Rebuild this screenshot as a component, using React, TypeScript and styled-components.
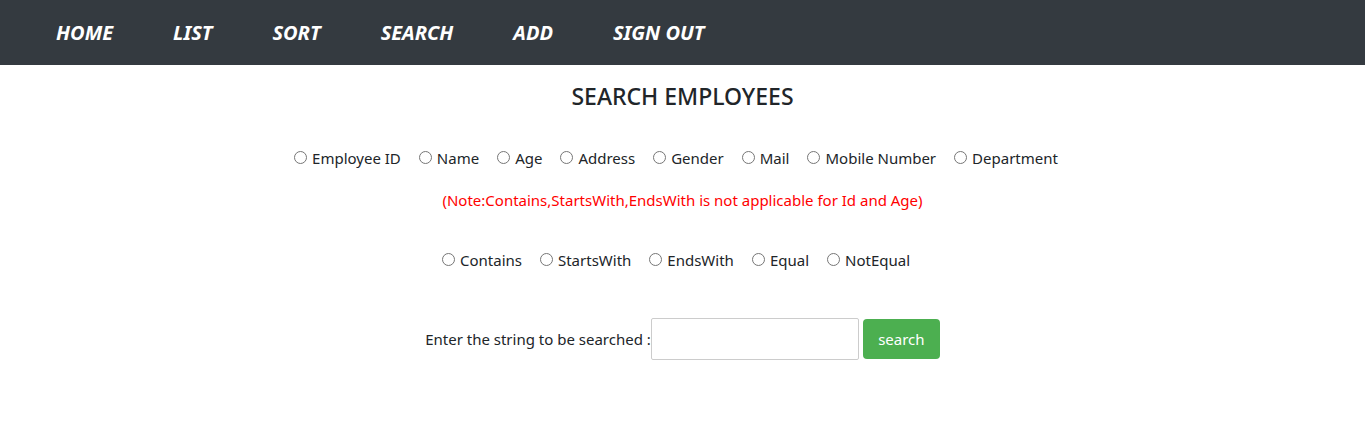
import { createGlobalStyle, styled } from 'styled-components';

const NAV_ITEMS = ['HOME', 'LIST', 'SORT', 'SEARCH', 'ADD', 'SIGN OUT'];
const FIELDS = ['Employee ID', 'Name', 'Age', 'Address', 'Gender', 'Mail', 'Mobile Number', 'Department'];
const MODES = ['Contains', 'StartsWith', 'EndsWith', 'Equal', 'NotEqual'];

export default function App() {
  return (
    <>
      <GlobalStyle />
      <NavBar>
        {NAV_ITEMS.map((item) => (
          <NavLink key={item} href="#">
            {item}
          </NavLink>
        ))}
      </NavBar>
      <Main>
        <Title>SEARCH EMPLOYEES</Title>
        <RadioRow $top={36}>
          {FIELDS.map((field) => (
            <RadioLabel key={field}>
              <Radio type="radio" name="field" />
              {field}
            </RadioLabel>
          ))}
        </RadioRow>
        <Note>(Note:Contains,StartsWith,EndsWith is not applicable for Id and Age)</Note>
        <RadioRow $top={38}>
          {MODES.map((mode) => (
            <RadioLabel key={mode}>
              <Radio type="radio" name="mode" />
              {mode}
            </RadioLabel>
          ))}
        </RadioRow>
        <SearchRow>
          <SearchLabel>Enter the string to be searched :</SearchLabel>
          <SearchInput type="text" />
          <SearchButton>search</SearchButton>
        </SearchRow>
      </Main>
    </>
  );
}

const GlobalStyle = createGlobalStyle`
  body {
    margin: 0;
    font-family: "Noto Sans", "Open Sans", sans-serif;
    color: #212529;
    background: #fff;
  }
`;

const NavBar = styled.nav`
  display: flex;
  align-items: center;
  gap: 60px;
  height: 65px;
  padding-left: 56px;
  background-color: #343a40;
`;

const NavLink = styled.a`
  color: #fff;
  text-decoration: none;
  font-size: 20px;
  font-weight: 700;
  font-style: italic;
`;

const Main = styled.main`
  display: flex;
  flex-direction: column;
  align-items: center;
  padding-top: 16px;
`;

const Title = styled.h4`
  margin: 0;
  font-size: 23px;
  font-weight: 500;
  line-height: 30px;
`;

const RadioRow = styled.div<{ $top: number }>`
  display: flex;
  gap: 18px;
  margin-top: ${({ $top }) => $top}px;
  padding-right: 13px;
  font-size: 15px;
  line-height: 22px;
`;

const RadioLabel = styled.label`
  display: flex;
  align-items: center;
  gap: 5px;
`;

const Radio = styled.input`
  width: 13px;
  height: 13px;
  margin: 0 0 2px;
  accent-color: #555;
`;

const Note = styled.p`
  margin: 20px 0 0;
  color: #ff0000;
  font-size: 15px;
  line-height: 22px;
`;

const SearchRow = styled.div`
  display: flex;
  align-items: center;
  gap: 4px;
  margin-top: 47px;
  font-size: 15px;
`;

const SearchLabel = styled.span`
  margin-right: -4px;
`;

const SearchInput = styled.input`
  box-sizing: border-box;
  width: 208px;
  height: 42px;
  border: 1px solid #ccc;
  border-radius: 2px;
  margin: 0;
`;

const SearchButton = styled.button`
  box-sizing: border-box;
  width: 77px;
  height: 40px;
  border: none;
  border-radius: 4px;
  background-color: #4caf50;
  color: #fff;
  font-family: inherit;
  font-size: 15px;
`;
